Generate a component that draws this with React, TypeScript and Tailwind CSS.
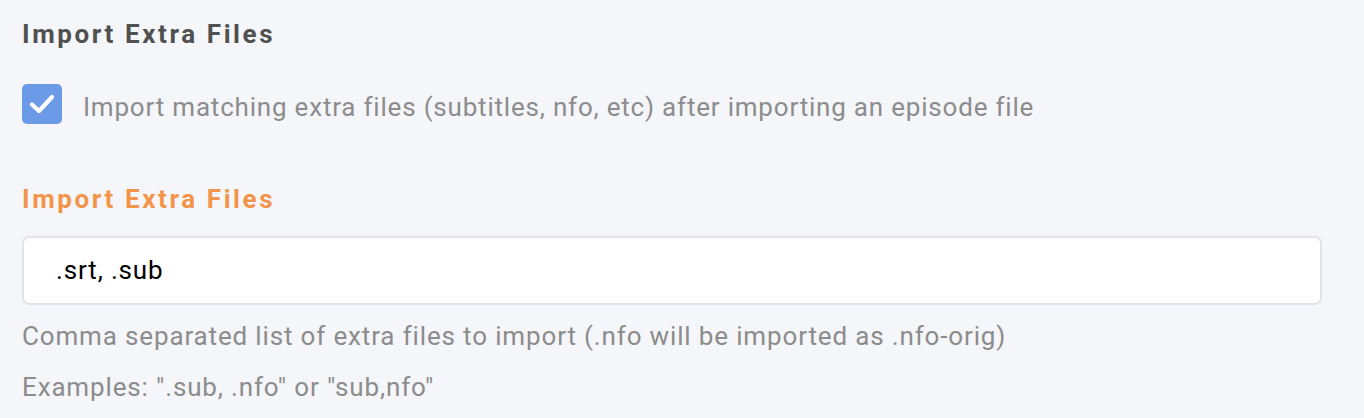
import React from "react";

export default function App() {
  return (
    <div
      className="w-[1364px] h-[418px] bg-[#f5f6fa] overflow-hidden pl-[22px] pr-[42px] pt-[18px]"
      style={{ fontFamily: "Roboto, 'Liberation Sans', sans-serif" }}
    >
      <h2 className="text-[26px] leading-[32px] font-bold tracking-[2.6px] text-[#505050]">
        Import Extra Files
      </h2>
      <div className="mt-[34px] flex items-center gap-[21px]">
        <div className="w-[40px] h-[40px] shrink-0 rounded-[5px] bg-[#6b9be8] flex items-center justify-center">
          <svg width="28" height="24" viewBox="0 0 28 24" fill="none">
            <path d="M4 12.5 L11 19 L24 5" stroke="white" strokeWidth="4.2" strokeLinecap="round" strokeLinejoin="round" />
          </svg>
        </div>
        <span className="mt-[6px] text-[26px] leading-[32px] tracking-[0.8px] text-[#8c8c8c]">
          Import matching extra files (subtitles, nfo, etc) after importing an episode file
        </span>
      </div>
      <div className="mt-[59px] text-[26px] leading-[32px] font-bold tracking-[2.6px] text-[#f2954b]">
        Import Extra Files
      </div>
      <div className="mt-[21px] h-[69px] rounded-[7px] border-2 border-[#dfe4ea] bg-white flex items-center pl-[32px] text-[26px] tracking-[0.85px] text-black">
        .srt, .sub
      </div>
      <div className="mt-[15px] text-[26px] leading-[32px] tracking-[0.85px] text-[#8c8c8c]">
        Comma separated list of extra files to import (.nfo will be imported as .nfo-orig)
      </div>
      <div className="mt-[19px] text-[26px] leading-[32px] tracking-[0.85px] text-[#8c8c8c]">
        Examples: ".sub, .nfo" or "sub,nfo"
      </div>
    </div>
  );
}
